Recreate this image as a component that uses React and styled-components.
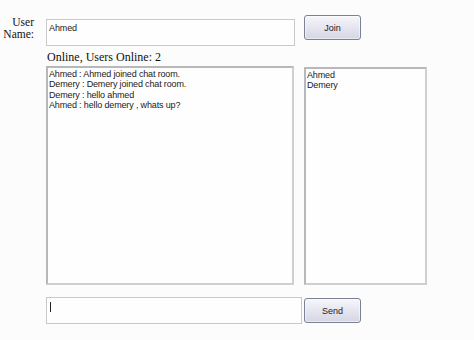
import React from "react";
import styled, { createGlobalStyle } from "styled-components";

const Global = createGlobalStyle`
  html, body { margin: 0; padding: 0; background: #fcfcfc; }
  body { width: 474px; height: 340px; overflow: hidden; }
`;

const Page = styled.div`
  display: flex;
  flex-direction: column;
  padding-top: 15px;
  width: 474px;
  height: 340px;
  box-sizing: border-box;
  font-family: "Liberation Sans", Arial, sans-serif;
  color: #1a1a1a;
`;

const Row = styled.div`
  display: flex;
  align-items: flex-start;
  margin-top: ${(p) => p.$mt || 0}px;
`;

const Label = styled.div`
  width: 34px;
  margin-right: 12px;
  margin-top: 1px;
  text-align: right;
  font-family: "Liberation Serif", "Times New Roman", serif;
  font-size: 11.5px;
  line-height: 12px;
  color: #111;
`;

const TextBox = styled.div`
  box-sizing: border-box;
  width: ${(p) => p.$w}px;
  height: 27px;
  margin-top: ${(p) => p.$mt || 0}px;
  margin-left: ${(p) => p.$ml || 0}px;
  border: 1px solid #c9c9c9;
  background: #fefefe;
  padding: 3px 2px;
  font-size: 9px;
  letter-spacing: -0.1px;
  line-height: 11px;
`;

const Button = styled.button`
  box-sizing: border-box;
  width: 57px;
  height: 25px;
  margin-left: ${(p) => p.$ml || 9}px;
  margin-top: ${(p) => p.$mt || 0}px;
  border: 1px solid #7a8194;
  border-radius: 3px;
  background: linear-gradient(#f6f6fb, #e4e4ef 55%, #d6d6e4);
  box-shadow: inset 0 0 0 1px #ffffff80;
  font-family: "Liberation Sans", Arial, sans-serif;
  font-size: 9px;
  color: #222;
  padding: 0;
`;

const Status = styled.div`
  margin-left: 47px;
  margin-top: 4px;
  font-family: "Liberation Serif", "Times New Roman", serif;
  font-size: 12px;
  line-height: 14px;
  color: #111;
`;

const ListBox = styled.div`
  box-sizing: border-box;
  width: ${(p) => p.$w}px;
  height: ${(p) => p.$h}px;
  margin-left: ${(p) => p.$ml}px;
  margin-top: ${(p) => p.$mt || 0}px;
  border: 2px solid #b8b8b8;
  border-right-color: #cfcfcf;
  border-bottom-color: #cfcfcf;
  background: #fefefe;
  padding: 1px 1px;
  font-size: 9px;
  letter-spacing: -0.15px;
  line-height: 10.3px;
  color: #1a1a1a;
`;

const Line = styled.div`
  white-space: nowrap;
`;

const Caret = styled.span`
  display: inline-block;
  width: 1px;
  height: 10px;
  background: #222;
  margin-left: 1px;
  margin-top: 1px;
`;

const messages = [
  "Ahmed : Ahmed joined chat room.",
  "Demery : Demery joined chat room.",
  "Demery : hello ahmed",
  "Ahmed : hello demery , whats up?",
];

const users = ["Ahmed", "Demery"];

export default function App() {
  return (
    <>
      <Global />
      <Page>
        <Row>
          <Label>
            User
            <br />
            Name:
          </Label>
          <TextBox $w={249} $mt={4}>Ahmed</TextBox>
          <Button $ml={9}>Join</Button>
        </Row>
        <Status>Online, Users Online: 2</Status>
        <Row $mt={2}>
          <ListBox $w={248} $h={219} $ml={46}>
            {messages.map((m) => (
              <Line key={m}>{m}</Line>
            ))}
          </ListBox>
          <ListBox $w={123} $h={218} $ml={10} $mt={1}>
            {users.map((u) => (
              <Line key={u}>{u}</Line>
            ))}
          </ListBox>
        </Row>
        <Row $mt={12}>
          <TextBox $w={256} $ml={46}>
            <Caret />
          </TextBox>
          <Button $ml={2} $mt={1}>Send</Button>
        </Row>
      </Page>
    </>
  );
}
